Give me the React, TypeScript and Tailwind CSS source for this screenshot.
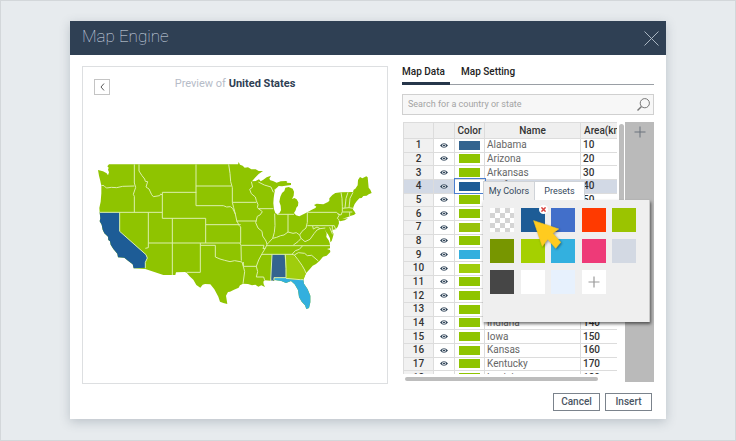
import React, { useState } from 'react';

const GREEN = '#8fc400';

const rows = [
  { name: 'Alabama', area: 10, color: '#34648f' },
  { name: 'Arizona', area: 20, color: GREEN },
  { name: 'Arkansas', area: 30, color: GREEN },
  { name: 'California', area: 40, color: '#1d5c96' },
  { name: 'Colorado', area: 50, color: GREEN },
  { name: 'Connecticut', area: 60, color: GREEN },
  { name: 'Delaware', area: 70, color: '#97c20a' },
  { name: 'D. of Columbia', area: 80, color: GREEN },
  { name: 'Florida', area: 90, color: '#33afde' },
  { name: 'Georgia', area: 100, color: '#a0cd0c' },
  { name: 'Hawaii', area: 110, color: GREEN },
  { name: 'Idaho', area: 120, color: GREEN },
  { name: 'Illinois', area: 130, color: GREEN },
  { name: 'Indiana', area: 140, color: GREEN },
  { name: 'Iowa', area: 150, color: GREEN },
  { name: 'Kansas', area: 160, color: GREEN },
  { name: 'Kentucky', area: 170, color: GREEN },
  { name: 'Louisiana', area: 180, color: GREEN },
];

const palette = [
  'transparent', '#1d5c96', '#426fca', '#ff3a00', '#9bc400',
  '#779600', '#a5d000', '#33b0df', '#ee3a78', '#d3d9e3',
  '#464646', '#ffffff', '#e7f1fd',
];

const country =
  'M57 28H417L444 28L446 21L450 29L458 32L464 38L474 37L484 43L497 43L506 48L519 48L506 57L495 68L486 79L497 78L507 73L512 79L520 74L530 67L543 62L538 71L541 76L549 78L560 83L572 79L588 78L592 80L590 83L603 84L603 90L586 92L576 94L566 93L560 99L553 104L550 112L556 102L553 115L551 130L550 145L552 163L556 174L562 178L568 175L573 166L572 152L568 140L571 125L576 114L583 108L586 98L596 96L608 101L612 110L611 122L606 132L613 129L620 133L625 142L624 152L619 158L617 166L612 174L618 181L628 184L640 178L652 172L664 165L676 159L679 155L672 150L680 146L700 148L714 141L718 137L718 130L727 120L736 114L753 112L789 111L791 104L796 101L803 91L804 75L810 66L817 70L829 64L833 67L836 98L841 104L845 114L836 118L830 122L820 123L815 129L808 130L800 139L794 147L790 157L789 164L793 169L797 176L791 180L783 182L772 187L757 191L774 190L764 196L750 199L746 195L747 205L743 216L737 223L729 224L727 230L731 237L728 248L725 258L721 262L720 250L714 238L709 232L704 222L710 236L709 246L716 256L719 264L720 271L720 280L711 282L720 285L721 291L710 302L699 305L689 317L678 327L668 332L659 343L648 355L640 374L642 386L653 403L661 422L661 442L657 459L649 462L645 451L635 440L627 426L624 405L614 388L603 378L588 384L574 378L554 375L550 378L544 369L542 377L524 376L520 380L521 388L525 396L514 391L505 395L496 389L486 391L474 387L459 386L450 391L446 398L432 404L420 410L414 411L408 422L410 434L412 447L400 444L390 440L385 425L373 403L361 388L345 387L338 389L331 398L319 390L310 374L298 363L290 353L285 351L258 352L256 360L220 360L166 342L131 340L128 328L114 317L103 308L84 307L82 296L70 282L62 269L60 259L55 255L54 245L43 235L38 224L35 209L29 199L31 190L29 172L28 159L32 140L34 115L34 92L31 78L27 62L24 45L39 49L50 55L54 61L57 52L54 44L56 38L52 34L57 28Z';

const borders = [
  'M34 91L42 92L49 99L64 97L80 98L98 94L133 93',
  'M133 28V84L137 97L130 118L133 124L133 172',
  'M29 172H217',
  'M147 28L147 48L156 62L164 72L166 79L173 80L168 96L177 102L185 119L190 125L209 122L212 117L217 120',
  'M217 112H319M217 112V190H347',
  'M318 28V152M318 93H424',
  'M247 190V360M175 172V264H450M175 264V278L166 280',
  'M347 190V264M347 209H452',
  'M318 152H400L410 156L421 155L428 160L436 177L440 196L447 211L452 216L452 264',
  'M416 28L420 55L422 80L427 98L427 142L431 158L436 177',
  'M427 142H499M438 198H500',
  'M331 264V352H290M331 271H376V306L390 312L404 316L420 320L434 317L456 321L460 334',
  'M450 264L453 271L454 317M454 271H522L519 281L526 280',
  'M460 334H500M460 321V334L464 350L459 386',
  'M484 80L488 96L479 103L484 116L496 126L499 137L504 149L502 158L517 170L510 180L502 184L497 203L504 219L516 229L518 243L528 258L531 268L526 280L516 296L506 315L499 334L503 350L499 366H521L524 376',
  'M504 161L550 161M505 81L523 90L543 96L550 112',
  'M554 176L555 212L553 232L548 250L536 263L531 268',
  'M561 178H612M594 178V231L582 240L572 242L560 247L548 250',
  'M594 231L609 235L619 233L629 240L636 229L648 219L652 202V172',
  'M652 172L740 172L748 180L742 190L748 195M652 212H733L737 223',
  'M629 240L633 250L624 260L610 270M633 250L645 260L660 253L672 236L681 225L690 221L706 219M668 213L670 222L681 216L690 221',
  'M531 272H720M516 298H606M638 272L628 283L616 287L606 298',
  'M546 298L542 377M586 298L588 340V368H552V375M588 370L631 374L640 374',
  'M606 298L613 300L625 293L644 295L652 302L665 301L685 318M613 300L624 314L636 331L644 345L648 355',
  'M753 112L756 130L757 155L757 170L753 180L742 176M774 112L768 130L765 159M789 112L780 130L777 159M757 160L777 158L789 160M757 171L787 171M779 171V184',
  'M727 212L727 230M719 217L727 236L730 239',
];

const EyeIcon = () => (
  <svg viewBox="0 0 16 10" className="mx-auto h-[5px] w-2" aria-hidden="true">
    <path d="M0 5Q8-4 16 5Q8 14 0 5Z" fill="#33475b" />
    <circle cx="8" cy="5" r="3.6" fill="#fff" />
    <circle cx="8" cy="5" r="2.2" fill="#33475b" />
  </svg>
);

const UsaMap = () => (
  <svg viewBox="0 0 870 480" className="mt-[62px] w-[290px] max-w-full" role="img" aria-label="United States">
    <path d={country} fill={GREEN} />
    <path d="M29 172H89V229L168 299L172 309L166 322L166 338L131 340L128 328L114 317L103 308L84 307L82 296L70 282L62 269L60 259L55 255L54 245L43 235L38 224L35 209L29 199L31 190Z" fill="#1d5c96" />
    <path d="M546 298H583L588 340V368H552L554 376L544 377L542 365Z" fill="#34648f" />
    <path d="M586 298H606L624 314L636 331L644 345L648 355L640 374L588 370Z" fill="#a0cd0c" />
    <path d="M552 368H588L592 372L630 375L636 371L640 374L642 386L653 403L661 422L661 442L657 459L649 462L645 451L635 440L627 426L624 405L614 388L603 378L588 384L574 378L554 375Z" fill="#33afde" />
    <g fill="none" stroke="#dcf0ac" strokeWidth="3" strokeLinejoin="round">
      {borders.map((d) => (
        <path key={d} d={d} />
      ))}
      <path d="M89 172V229L168 299L172 309L166 322V340" />
    </g>
  </svg>
);

const ColorPicker = () => (
  <div className="absolute top-[59px] right-1 left-[81px] z-10 text-[#33475b]">
    <div className="flex h-[19px] text-[9px] leading-4" role="tablist">
      <button role="tab" aria-selected="true" className="w-[51px] border-t border-l border-[#d0d3d6] bg-[#efefef]">
        My Colors
      </button>
      <button role="tab" aria-selected="false" className="w-[51px] border border-b-0 border-[#cfd3d8] bg-white">
        Presets
      </button>
    </div>
    <div className="h-[122px] border-r border-[#c9c9c9] bg-[#efefef] pt-2 pr-[13px] pl-[7px] shadow-[1px_2px_3px_rgba(0,0,0,0.55)]">
      <div className="relative grid grid-cols-[repeat(5,24px)] justify-between gap-y-[7px]">
        {palette.map((color) =>
          color === 'transparent' ? (
            <button
              key={color}
              aria-label="No color"
              className="h-6 bg-white bg-[conic-gradient(#d4d4d4_25%,#fff_0_50%,#d4d4d4_0_75%,#fff_0)] bg-size-[10px_10px]"
            />
          ) : (
            <button key={color} aria-label={color} className="h-6" style={{ backgroundColor: color }} />
          )
        )}
        <button aria-label="Add color" className="flex h-6 items-center justify-center bg-white">
          <svg viewBox="0 0 12 12" className="size-3" stroke="#9a9a9a" strokeWidth="1.2">
            <path d="M6 0.5V11.5M0.5 6H11.5" />
          </svg>
        </button>
        <button aria-label="Remove color" className="absolute -top-[3px] left-[49px] flex size-[9px] items-center justify-center rounded-full bg-white">
          <svg viewBox="0 0 6 6" className="size-[5px]" stroke="#d9433f" strokeWidth="1.8">
            <path d="M0.5 0.5L5.5 5.5M5.5 0.5L0.5 5.5" />
          </svg>
        </button>
        <svg viewBox="172 147 96 99" className="absolute top-[11px] left-[42px] h-[33px] w-8 drop-shadow-[1px_1px_1px_rgba(0,0,0,0.4)]" aria-hidden="true">
          <path d="M177 152L252 177L234 190L258 217L243 235L219 207L203 229Z" fill="#ffcb1f" stroke="#ffcb1f" strokeWidth="2" strokeLinejoin="round" />
        </svg>
      </div>
    </div>
  </div>
);

const DataTable = () => (
  <div className="relative mt-[7px] flex flex-1">
    <div className="min-w-0 flex-1 pl-px">
      <div className="flex">
        <div className="h-[252px] min-w-0 flex-1 overflow-hidden">
          <table className="h-[263px] w-[226px] table-fixed border-collapse text-[10px] leading-3 text-[#333]">
            <colgroup>
              <col className="w-[30px]" />
              <col className="w-[21px]" />
              <col className="w-[30px]" />
              <col className="w-[96px]" />
              <col className="w-[49px]" />
            </colgroup>
            <thead>
              <tr className="h-4 bg-[#efefef]">
                <th className="border border-[#dcdcdc]" />
                <th className="border border-[#dcdcdc]" />
                <th className="border border-[#dcdcdc] font-medium">Color</th>
                <th className="border border-[#dcdcdc] font-medium">Name</th>
                <th className="border border-[#dcdcdc] pl-[3px] text-left font-medium whitespace-nowrap">Area(km²)</th>
              </tr>
            </thead>
            <tbody>
              {rows.map((row, i) => {
                const active = row.name === 'California';
                return (
                  <tr key={row.name} className={active ? 'bg-[#d2d9e5]' : 'bg-white'}>
                    <td className={`border border-[#dcdcdc] text-center font-medium ${active ? '' : 'bg-[#f1f1f1]'}`}>{i + 1}</td>
                    <td className="border border-[#dcdcdc]">
                      <EyeIcon />
                    </td>
                    <td className={`border border-[#dcdcdc] ${active ? 'bg-white outline outline-[#4a7ed0]' : ''}`}>
                      <div className="mx-auto h-[9px] w-[21px]" style={{ backgroundColor: row.color }} />
                    </td>
                    <td className="border border-[#dcdcdc] pl-[2px] text-[#666]">{row.name}</td>
                    <td className="border border-[#dcdcdc] pl-[2px] font-medium">{row.area}</td>
                  </tr>
                );
              })}
            </tbody>
          </table>
        </div>
        <div className="ml-[2px] w-[5px] pt-[2px]">
          <div className="h-[150px] rounded-full bg-[#bdbdbd]" />
        </div>
      </div>
      <div className="mr-[26px] ml-[2px] pt-[3px]">
        <div className="h-1 rounded-full bg-[#bdbdbd]" />
      </div>
    </div>
    <div className="ml-px mb-[2px] w-[29px] bg-[#bababa] pt-1">
      <button aria-label="Add column" className="mx-auto block w-3">
        <svg viewBox="0 0 12 12" className="size-3" stroke="#6a737c" strokeWidth="1">
          <path d="M6 0.5V11.5M0.5 6H11.5" />
        </svg>
      </button>
    </div>
    <ColorPicker />
  </div>
);

const App: React.FC = () => {
  const [search, setSearch] = useState('');

  return (
    <div className="flex min-h-screen border border-[#d3d7da] bg-[#e7ebee] px-[69px] pt-5 pb-[21px] font-[Roboto,sans-serif]">
      <div className="flex flex-1 flex-col bg-white shadow-[0_3px_10px_rgba(60,75,90,0.25)]">
        <header className="flex h-[34px] items-center justify-between bg-[#2f4054] pr-[7px] pl-3">
          <h1 className="mb-1 text-[17px] leading-6 font-thin text-[#d5dde6]">Map Engine</h1>
          <button aria-label="Close">
            <svg viewBox="0 0 15 15" className="block size-[15px]" stroke="#aab6c2" strokeWidth="1">
              <path d="M0.5 0.5L14.5 14.5M14.5 0.5L0.5 14.5" />
            </svg>
          </button>
        </header>

        <main className="grid flex-1 grid-cols-[306fr_252fr] gap-[14px] px-3 pt-[11px]">
          <section className="relative flex flex-col items-center border border-[#dddfe1] pt-2">
            <button aria-label="Back" className="absolute top-3 left-[11px] flex size-4 items-center justify-center border border-[#c4c4c4]">
              <svg viewBox="0 0 5 9" className="h-2 w-[5px]" fill="none" stroke="#555" strokeWidth="1.1">
                <path d="M4.2 0.6L0.8 4.5L4.2 8.4" />
              </svg>
            </button>
            <h2 className="text-[11px] leading-[18px] text-[#b6bcc8]">
              Preview of <span className="font-bold text-[#2f4054]">United States</span>
            </h2>
            <UsaMap />
          </section>

          <section className="flex min-w-0 flex-col">
            <div role="tablist" className="flex border-b border-[#9a9fa5] text-[10px] leading-3 font-medium text-[#222]">
              <button role="tab" aria-selected="true" className="-mb-px w-12 border-b-[3px] border-[#26364a] pb-1 text-left whitespace-nowrap">
                Map Data
              </button>
              <button role="tab" aria-selected="false" className="ml-[11px] pb-[6px]">
                Map Setting
              </button>
            </div>

            <label className="mt-[9px] flex h-[21px] items-center border border-[#d0d0d0] bg-[#f7f7f7] pr-[3px] pl-[5px]">
              <input
                value={search}
                onChange={(e) => setSearch(e.target.value)}
                aria-label="Search for a country or state"
                placeholder="Search for a country or state"
                className="min-w-0 flex-1 text-[9px] outline-none placeholder:text-[#a3a3a3]"
              />
              <svg viewBox="0 0 13 13" className="size-[13px]" fill="none" stroke="#777" strokeWidth="1">
                <circle cx="7.8" cy="5.2" r="4.6" />
                <path d="M4.5 8.5L0.5 12.5" strokeWidth="1.4" />
              </svg>
            </label>

            <DataTable />
          </section>
        </main>

        <footer className="flex justify-end gap-[5px] pt-[9px] pr-[14px] pb-2 text-[10px] leading-4 font-medium text-[#4a5563]">
          <button className="w-[47px] border border-[#7b838c]">Cancel</button>
          <button className="w-[47px] border border-[#7b838c]">Insert</button>
        </footer>
      </div>
    </div>
  );
};

export default App;
